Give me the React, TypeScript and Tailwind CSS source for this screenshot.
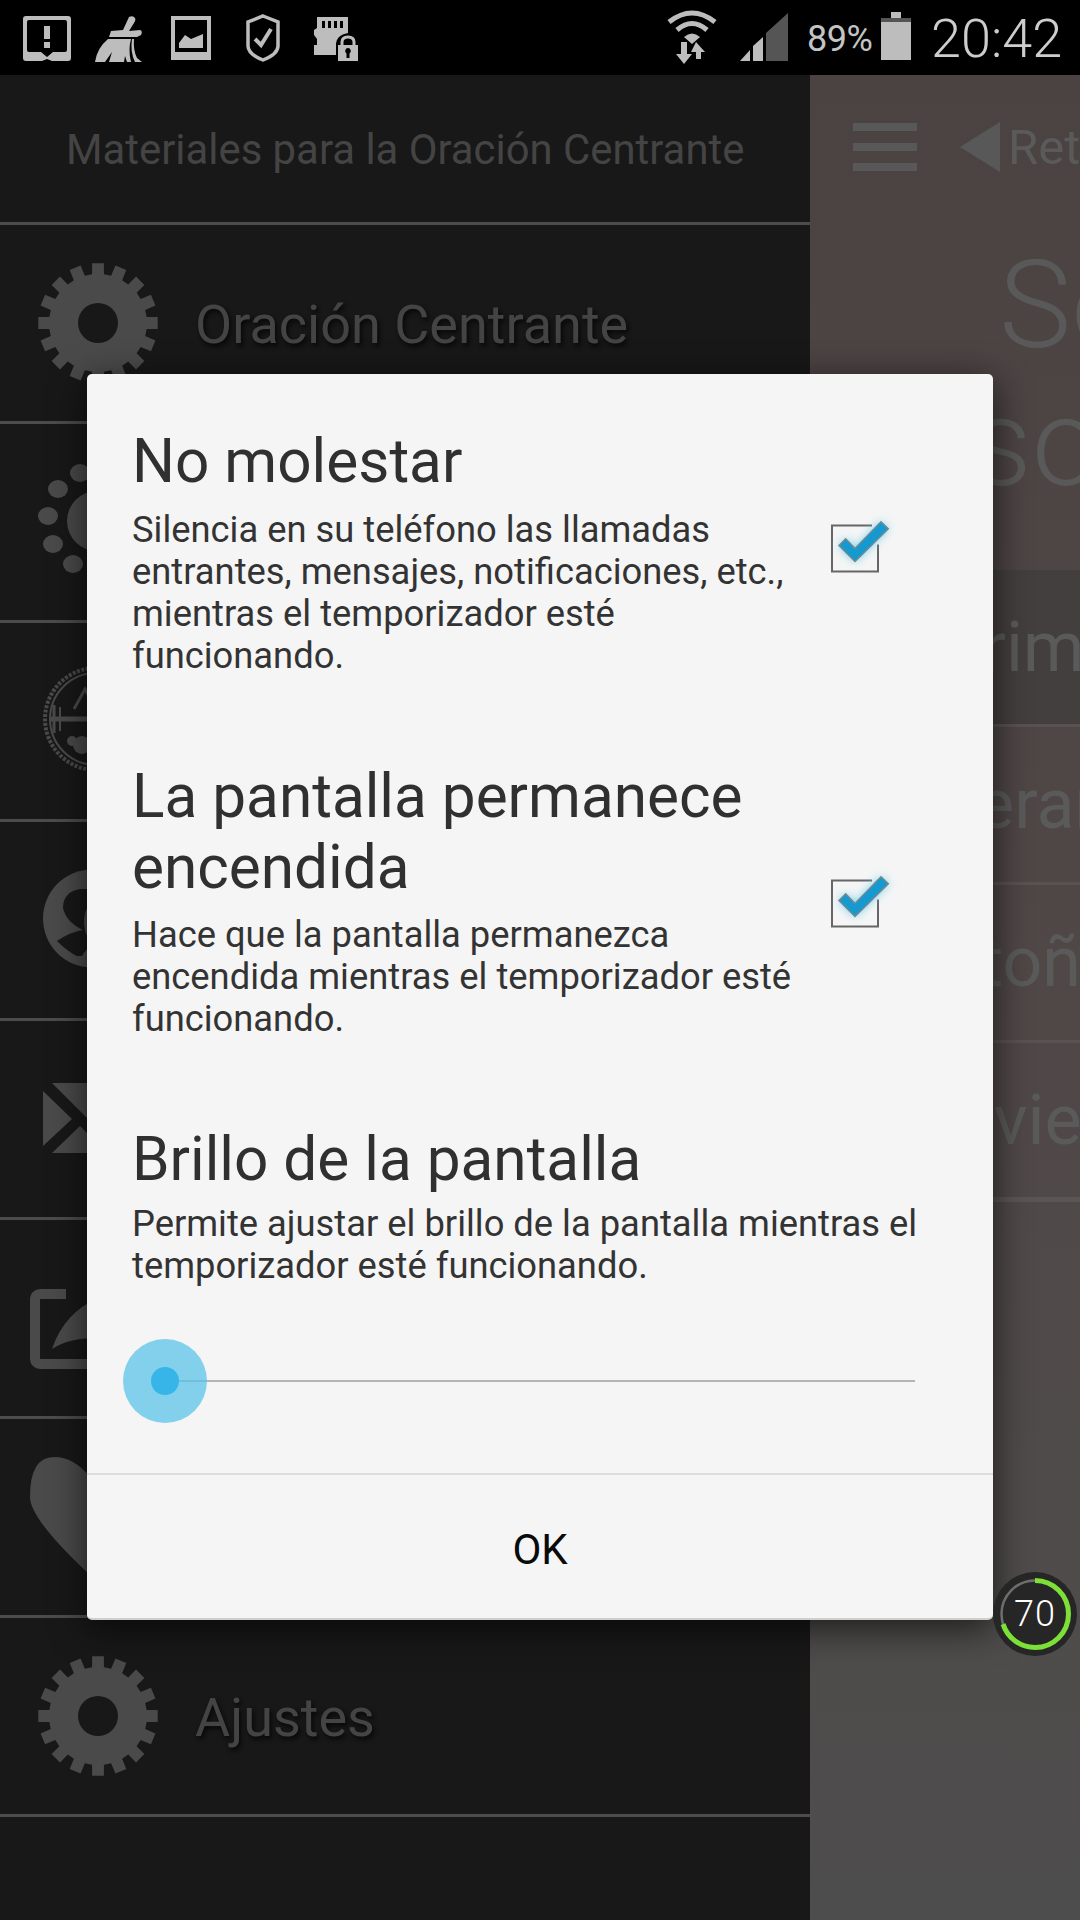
const F = "font-['Roboto',sans-serif]";

function gearPath(cx: number, cy: number, teeth: number, ro: number, ri: number, hole: number) {
  let d = "";
  const step = (Math.PI * 2) / teeth;
  for (let i = 0; i < teeth; i++) {
    const a = i * step - Math.PI / 2;
    const pts = [
      [ri, a - step * 0.31],
      [ro, a - step * 0.25],
      [ro, a + step * 0.25],
      [ri, a + step * 0.31],
    ];
    pts.forEach(([r, t], j) => {
      d += `${i === 0 && j === 0 ? "M" : "L"}${(cx + r * Math.cos(t)).toFixed(2)} ${(cy + r * Math.sin(t)).toFixed(2)} `;
    });
  }
  d += `Z M${cx - hole} ${cy} a${hole} ${hole} 0 1 0 ${hole * 2} 0 a${hole} ${hole} 0 1 0 ${-hole * 2} 0 Z`;
  return d;
}

function Gear() {
  return (
    <svg width="120" height="120" viewBox="0 0 120 120" className="block">
      <path d={gearPath(60, 60, 16, 60, 49, 20)} fill="#4a4a4a" fillRule="evenodd" />
    </svg>
  );
}

function Paw() {
  return (
    <svg width="120" height="120" viewBox="0 0 120 120" fill="#4a4a4a" className="block">
      <ellipse cx="10" cy="54" rx="10" ry="9" />
      <ellipse cx="20" cy="27" rx="10" ry="9" />
      <ellipse cx="15" cy="82" rx="10" ry="9" />
      <ellipse cx="35" cy="102" rx="10" ry="9" />
      <ellipse cx="42" cy="11" rx="10" ry="9" />
      <circle cx="59" cy="59" r="30" />
    </svg>
  );
}

function Emblem() {
  return (
    <svg width="120" height="120" viewBox="0 0 120 120" fill="none" stroke="#4a4a4a" className="block">
      <circle cx="58" cy="58" r="51" strokeWidth="4" strokeDasharray="3 1.5" />
      <circle cx="58" cy="58" r="46" strokeWidth="2" />
      <path d="M12 58H104" strokeWidth="5" />
      <path d="M16 44V72" strokeWidth="3" />
      <path d="M22 46V70" strokeWidth="2" />
      <path d="M24 48L35 28 46 48" strokeWidth="3" transform="translate(12 0)" />
      <circle cx="34" cy="80" r="5" fill="#4a4a4a" stroke="none" />
      <circle cx="44" cy="84" r="9" fill="#4a4a4a" stroke="none" />
    </svg>
  );
}

function Person() {
  return (
    <svg width="120" height="120" viewBox="0 0 120 120" className="block">
      <circle cx="54" cy="58.5" r="49" fill="#4a4a4a" />
      <path d="M19 81Q32 72 45 70Q28 62 25 48Q25 32 42 29H70V96H39Q30 92 19 81Z" fill="#181818" />
      <ellipse cx="60" cy="62" rx="14" ry="22" fill="#4a4a4a" />
      <path d="M43 99Q46 88 60 84V104H43Z" fill="#4a4a4a" />
    </svg>
  );
}

function Mail() {
  return (
    <svg width="120" height="120" viewBox="0 0 120 120" fill="#4a4a4a" className="block">
      <path d="M5 32V87L34 60Z" />
      <path d="M14 24H70V80Z" />
      <path d="M14 94L42 67 70 95V94Z" />
    </svg>
  );
}

function Edit() {
  return (
    <svg width="120" height="120" viewBox="0 0 120 120" fill="none" className="block overflow-visible">
      <path d="M28 36H3Q-3 36 -3 42V100Q-3 106 3 106H60" stroke="#4a4a4a" strokeWidth="10" />
      <path d="M14 91Q26 55 60 40V80Q30 80 14 91Z" fill="#4a4a4a" />
    </svg>
  );
}

function Heart() {
  return (
    <svg width="120" height="120" viewBox="0 0 120 120" fill="#4a4a4a" className="block overflow-visible">
      <path transform="translate(-8 0)" d="M60 20Q44 0 24 0Q0 0 0 40Q0 62 60 118Q120 62 120 32Q120 0 96 0Q76 0 60 20Z" />
    </svg>
  );
}

const menu: { icon: React.ReactNode; label?: string }[] = [
  { icon: <Gear />, label: "Oración Centrante" },
  { icon: <Paw /> },
  { icon: <Emblem /> },
  { icon: <Person /> },
  { icon: <Mail /> },
  { icon: <Edit /> },
  { icon: <Heart /> },
  { icon: <Gear />, label: "Ajustes" },
];

function Drawer() {
  return (
    <div className="w-[810px] shrink-0 bg-[#181818] flex flex-col">
      <div className="h-[150px] flex items-center pl-[66px] pt-[3px] border-b-[3px] border-[#4c4c4b]">
        <span className="text-[41.85px] text-[#444444] leading-none whitespace-nowrap">Materiales para la Oración Centrante</span>
      </div>
      {menu.map((m, i) => (
        <div key={i} className="h-[199px] shrink-0 border-b-[3px] border-[#4c4c4b] flex items-center pl-[38px] gap-[37px]">
          <div className="w-[120px] h-[120px] shrink-0">{m.icon}</div>
          {m.label && (
            <span className="text-[54px] leading-none text-[#444444] whitespace-nowrap pt-[4px] [text-shadow:2px_3px_4px_#080808]">{m.label}</span>
          )}
        </div>
      ))}
    </div>
  );
}

function RightPane() {
  const row = "flex items-center text-[70px] whitespace-nowrap";
  return (
    <div className="flex-1 min-w-0 overflow-hidden bg-[linear-gradient(180deg,#4b4242_0%,#504747_50%,#4f4b4a_75%,#4e4d4d_100%)] text-[#5a5a5a]">
      <div className="flex items-center h-[121px] pl-[43px] pt-[22px]">
        <div className="w-[64px] shrink-0 flex flex-col gap-[12px]">
          <div className="h-[8px] bg-[#585858]" />
          <div className="h-[8px] bg-[#585858]" />
          <div className="h-[8px] bg-[#585858]" />
        </div>
        <svg width="40" height="50" viewBox="0 0 40 50" className="ml-[43px] shrink-0"><path d="M40 0V50L0 25Z" fill="#585858" /></svg>
        <span className="ml-[8px] text-[49px] leading-none whitespace-nowrap pt-[2px]">Retroceder</span>
      </div>
      <div className="h-[374px] pt-[41px] font-light text-[122px] leading-[138px] whitespace-nowrap text-[#595959]">
        <div className="ml-[189px]">Sesión</div>
        <div className="ml-[160px]">sola</div>
      </div>
      <div className={`${row} h-[157px] bg-[#443f3f] border-b-[3px] border-[#5a5251] pl-[128px]`}>Primavera</div>
      <div className={`${row} h-[158px] border-b-[3px] border-[#5a5251] pl-[124px]`}>Verano</div>
      <div className={`${row} h-[158px] border-b-[3px] border-[#5a5251] pl-[122px]`}>Otoño</div>
      <div className={`${row} h-[159px] border-b-[5px] border-[#5a5655] pl-[126px]`}>Invierno</div>
    </div>
  );
}

function StatusBar() {
  const c = "#bdbdbd";
  return (
    <div className="h-[75px] bg-black flex items-start relative">
      <svg width="48" height="45" viewBox="0 0 48 45" className="ml-[23px] mt-[16px] shrink-0">
        <path fillRule="evenodd" clipRule="evenodd" fill={c} d="M3 0H45Q48 0 48 3V42Q48 45 45 45H29L24 43 19 45H3Q0 45 0 42V3Q0 0 3 0ZM6 4Q4 4 4 6V34Q4 36 6 36H18L24 41 30 36H42Q44 36 44 34V6Q44 4 42 4Z" />
        <rect x="21" y="10" width="6" height="13" fill={c} />
        <rect x="21" y="26" width="6" height="6" fill={c} />
      </svg>
      <svg width="48" height="48" viewBox="0 0 48 48" className="ml-[24px] mt-[16px] shrink-0">
        <path fill={c} d="M34 1Q38 -1 40 2Q41 4 39 7L34 15 45 14Q48 15 46 19L42 21H14L16 15 28 14Z" />
        <path fill={c} d="M13 23H36Q33 34 36 46H32L30 40 29 46H14L17 36 10 46H0Q2 32 13 23Z" />
        <path fill={c} d="M39 23Q38 34 42 42L47 46H40Q35 36 37 23Z" />
      </svg>
      <svg width="40" height="44" viewBox="0 0 40 44" className="ml-[28px] mt-[16px] shrink-0">
        <path fillRule="evenodd" fill={c} d="M0 0H40V44H0ZM4 4V36H36V4Z" />
        <path fill={c} d="M8 32V27L14 19 20 23 32 18V32Z" />
      </svg>
      <svg width="34" height="48" viewBox="0 0 34 48" className="ml-[35px] mt-[14px] shrink-0" fill="none">
        <path d="M17 2L32 8V32Q32 40 17 46Q2 40 2 32V8Z" stroke={c} strokeWidth="3.5" />
        <path d="M9 25L15 31 25 15" stroke={c} strokeWidth="4" />
      </svg>
      <svg width="46" height="46" viewBox="0 0 46 46" className="ml-[34px] mt-[17px] shrink-0">
        <path fill={c} d="M3 0H34V16Q22 18 22 28V38H0V28H3V22L0 18V13L3 11Z" />
        <path fill="#000" d="M8 4H11V11H8ZM14 4H17V11H14ZM20 4H23V11H20ZM26 4H29V11H26Z" />
        <path fill="#000" d="M22 26H46V46H22Z" />
        <path fill="none" stroke={c} strokeWidth="3" d="M28 29V25Q28 20 34 20 40 20 40 25V29" />
        <path fillRule="evenodd" fill={c} d="M24 28H44V44H24ZM34 31A3 3 0 0 0 32.5 36.5V41H35.5V36.5A3 3 0 0 0 34 31Z" />
      </svg>
      <div className="flex-1" />
      <svg width="50" height="54" viewBox="0 0 50 54" className="mt-[10px] shrink-0" fill="none">
        <path d="M2 12Q25 -6 48 12" stroke={c} strokeWidth="5" />
        <path d="M10 20Q25 7 40 20" stroke={c} strokeWidth="5" />
        <path d="M17 27Q25 20 33 27L25 34Z" fill={c} />
        <path fill={c} d="M14 32H20V44H25L17 54 9 44H14ZM29 32L38 42H34V49H29V42H24Z" />
      </svg>
      <svg width="48" height="49" viewBox="0 0 48 49" className="ml-[23px] mt-[13px] shrink-0">
        <path d="M48 0V48H26V20Z" fill="#555555" />
        <path d="M23 24V48H13V33Z" fill={c} />
        <path d="M10 37V48H0Z" fill={c} />
      </svg>
      <span className="ml-[19px] mt-[19px] text-[36px] leading-[40px] text-[#c4c4c4] w-[63px] whitespace-nowrap tracking-[-0.5px]">89%</span>
      <svg width="30" height="48" viewBox="0 0 30 48" className="ml-[11px] mt-[12px] shrink-0">
        <path d="M10 0H20V6H30V48H0V6H10Z" fill={c} />
        <path d="M0 6H30V10H0Z" fill="#555555" />
      </svg>
      <span className="ml-[20px] mr-[21px] mt-[9px] w-[128px] text-[54px] leading-[60px] font-light text-[#cdcdcd] whitespace-nowrap">20:42</span>
    </div>
  );
}

function Check({ className }: { className: string }) {
  const d = "M8 32.5L14.7 25.8 24 35.5 50 8.8 57.3 15.8 24 48.5Z";
  return (
    <svg width="66" height="62" viewBox="0 0 66 62" className={`shrink-0 overflow-visible ${className}`}>
      <defs>
        <filter id="glow" x="-40%" y="-40%" width="180%" height="180%"><feGaussianBlur stdDeviation="5" /></filter>
      </defs>
      <path d="M47 31.5V58.5H1V12.5H41" fill="none" stroke="#666666" strokeWidth="2" />
      <path d={d} fill="#66cdec" filter="url(#glow)" />
      <path d={d} fill="#149ad0" stroke="#74878f" strokeWidth="1.5" />
    </svg>
  );
}

function Dialog() {
  const title = "text-[60.3px] leading-[71px] text-[#303030]";
  const body = "text-[36.35px] leading-[42px] text-[#333333]";
  return (
    <div className="absolute left-[87px] top-[374px] w-[906px] h-[1246px] bg-[#f5f5f5] rounded-[5px] border-b-[2px] border-[#cfcfcf] shadow-[0_8px_36px_rgba(0,0,0,0.65)] flex flex-col overflow-hidden">
      <div className="flex-1 pl-[45px] pt-[52px]">
        <div className="flex">
          <div className="w-[670px] mr-[29px]">
            <div className={title}>No molestar</div>
            <div className={`${body} mt-[12px]`}>Silencia en su teléfono las llamadas entrantes, mensajes, notificaciones, etc., mientras el temporizador esté funcionando.</div>
          </div>
          <Check className="mt-[87px]" />
        </div>
        <div className="flex mt-[84px]">
          <div className="w-[670px] mr-[29px]">
            <div className={title}>La pantalla permanece encendida</div>
            <div className={`${body} mt-[11px]`}>Hace que la pantalla permanezca encendida mientras el temporizador esté funcionando.</div>
          </div>
          <Check className="mt-[107px]" />
        </div>
        <div className="mt-[84px] w-[810px]">
          <div className={title}>Brillo de la pantalla</div>
          <div className={`${body} mt-[8px]`}>Permite ajustar el brillo de la pantalla mientras el temporizador esté funcionando.</div>
        </div>
        <div className="relative mt-[93px] ml-[33px] h-[2px] w-[750px] bg-[#b4b4b4]">
          <div className="absolute left-[-42px] top-[-41px] w-[84px] h-[84px] rounded-full bg-[#5cc3ea]/75 blur-[0.5px]" />
          <div className="absolute left-[-14px] top-[-13px] w-[28px] h-[28px] rounded-full bg-[#36b6e8]" />
        </div>
      </div>
      <div className="h-[145px] border-t-[2px] border-[#dddddd] flex items-center justify-center text-[42px] text-[#0a0a0a] pt-[6px]">OK</div>
    </div>
  );
}

function Badge() {
  return (
    <div className="absolute left-[993px] top-[1572px] w-[84px] h-[84px] rounded-full bg-[#262626] flex items-center justify-center">
      <svg width="84" height="84" viewBox="0 0 84 84" className="absolute inset-0">
        <circle cx="42" cy="42" r="33.5" fill="none" stroke="#6e6e6e" strokeWidth="2.5" />
        <circle cx="42" cy="42" r="33.5" fill="none" stroke="#7ce038" strokeWidth="5" strokeDasharray="147.3 210.5" transform="rotate(-90 42 42)" />
      </svg>
      <span className="relative text-[36px] leading-none font-light text-white tracking-[1px]">70</span>
    </div>
  );
}

export default function App() {
  return (
    <div className={`${F} relative w-[1080px] h-[1920px] overflow-hidden bg-[#181818] flex flex-col`}>
      <StatusBar />
      <div className="flex-1 flex min-h-0">
        <Drawer />
        <RightPane />
      </div>
      <Dialog />
      <Badge />
    </div>
  );
}
